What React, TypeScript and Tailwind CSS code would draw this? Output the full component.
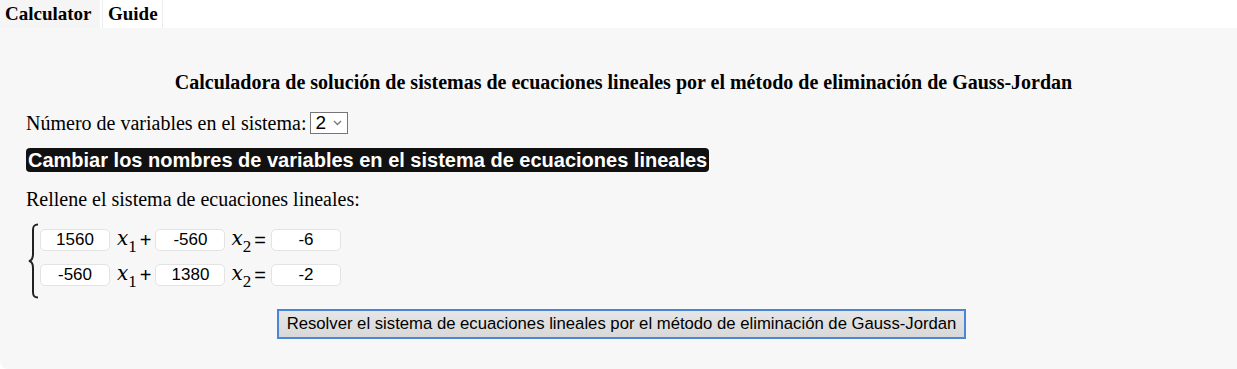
import React from 'react';

const serif = "font-['Liberation_Serif','Times_New_Roman',serif]";
const sans = "font-['Liberation_Sans',Arial,sans-serif]";

const rows = [
  ['1560', '-560', '-6'],
  ['-560', '1380', '-2'],
];

function Cell({ value }: { value: string }) {
  return (
    <input
      readOnly
      value={value}
      className={`${sans} w-[70px] h-[22px] rounded-[5px] border border-[#e3e3e3] bg-white text-center text-[17px] text-black outline-none`}
    />
  );
}

function Variable({ index }: { index: number }) {
  return (
    <span className="leading-none">
      <span className="font-['DejaVu_Serif',serif] italic text-[20px]">x</span>
      <sub className={`${serif} text-[17px] align-[-3px]`}>{index}</sub>
    </span>
  );
}

export default function App() {
  return (
    <div className={`${serif} w-[1237px] h-[369px] bg-white text-black flex flex-col`}>
      {/* Pestañas */}
      <div className="flex h-[28px]">
        <div className="w-[100px] pl-[5px] bg-[#f5f5f5] font-bold text-[19px] leading-[28px]">Calculator</div>
        <div className="ml-[2px] w-[61px] pl-[5px] bg-white border-x border-[#ececec] font-bold text-[19px] leading-[28px]">Guide</div>
      </div>

      {/* Panel */}
      <div className="flex-1 bg-[#f7f7f7] rounded-bl-[8px] px-[26px] pt-[43px]">
        <h1 className="text-center font-bold text-[20px] leading-[22px] pl-[10px]">
          Calculadora de solución de sistemas de ecuaciones lineales por el método de eliminación de Gauss-Jordan
        </h1>

        <div className="mt-[19px] flex items-center text-[20px] h-[22px]">
          <span>Número de variables en el sistema:</span>
          <div className={`${sans} ml-[4px] w-[38px] h-[22px] border border-[#767676] bg-white flex items-center justify-between pl-[4px] pr-[5px] text-[19px]`}>
            <span>2</span>
            <svg width="9" height="6" viewBox="0 0 9 6" fill="none" stroke="#777" strokeWidth="1.3">
              <path d="M1 1l3.5 3.5L8 1" />
            </svg>
          </div>
        </div>

        <div className="mt-[14px]">
          <span className={`${sans} inline-block bg-[#111] text-white font-bold text-[20px] leading-[24px] px-[2px] rounded-[4px]`}>
            Cambiar los nombres de variables en el sistema de ecuaciones lineales
          </span>
        </div>

        <p className="mt-[14px] text-[20px] leading-[22px]">Rellene el sistema de ecuaciones lineales:</p>

        <div className="mt-[13px] flex items-stretch">
          <svg width="12" height="76" viewBox="0 0 12 76" className="ml-[2px]" fill="none" stroke="#222" strokeWidth="2">
            <path d="M10 1.5C6 1.5 5 3 5 7v24c0 4-1.5 6.5-4 7 2.5.5 4 3 4 7v24c0 4 1 5.5 5 5.5" />
          </svg>
          <div className="flex flex-col gap-[13px] pt-[6px]">
            {rows.map((r, i) => (
              <div key={i} className="flex items-center h-[22px]">
                <Cell value={r[0]} />
                <span className="ml-[7px]"><Variable index={1} /></span>
                <span className={`${sans} ml-[3px] text-[20px]`}>+</span>
                <span className="ml-[4px]"><Cell value={r[1]} /></span>
                <span className="ml-[6px]"><Variable index={2} /></span>
                <span className={`${sans} ml-[3px] text-[20px]`}>=</span>
                <span className="ml-[5px]"><Cell value={r[2]} /></span>
              </div>
            ))}
          </div>
        </div>

        <div className="mt-[10px] flex justify-center pl-[6px]">
          <button
            className={`${sans} h-[30px] px-[8px] border-2 border-[#4a86d8] bg-gradient-to-b from-[#e6e6e6] to-[#d8d8d8] text-[16.7px] text-black`}
          >
            Resolver el sistema de ecuaciones lineales por el método de eliminación de Gauss-Jordan
          </button>
        </div>
      </div>
    </div>
  );
}
